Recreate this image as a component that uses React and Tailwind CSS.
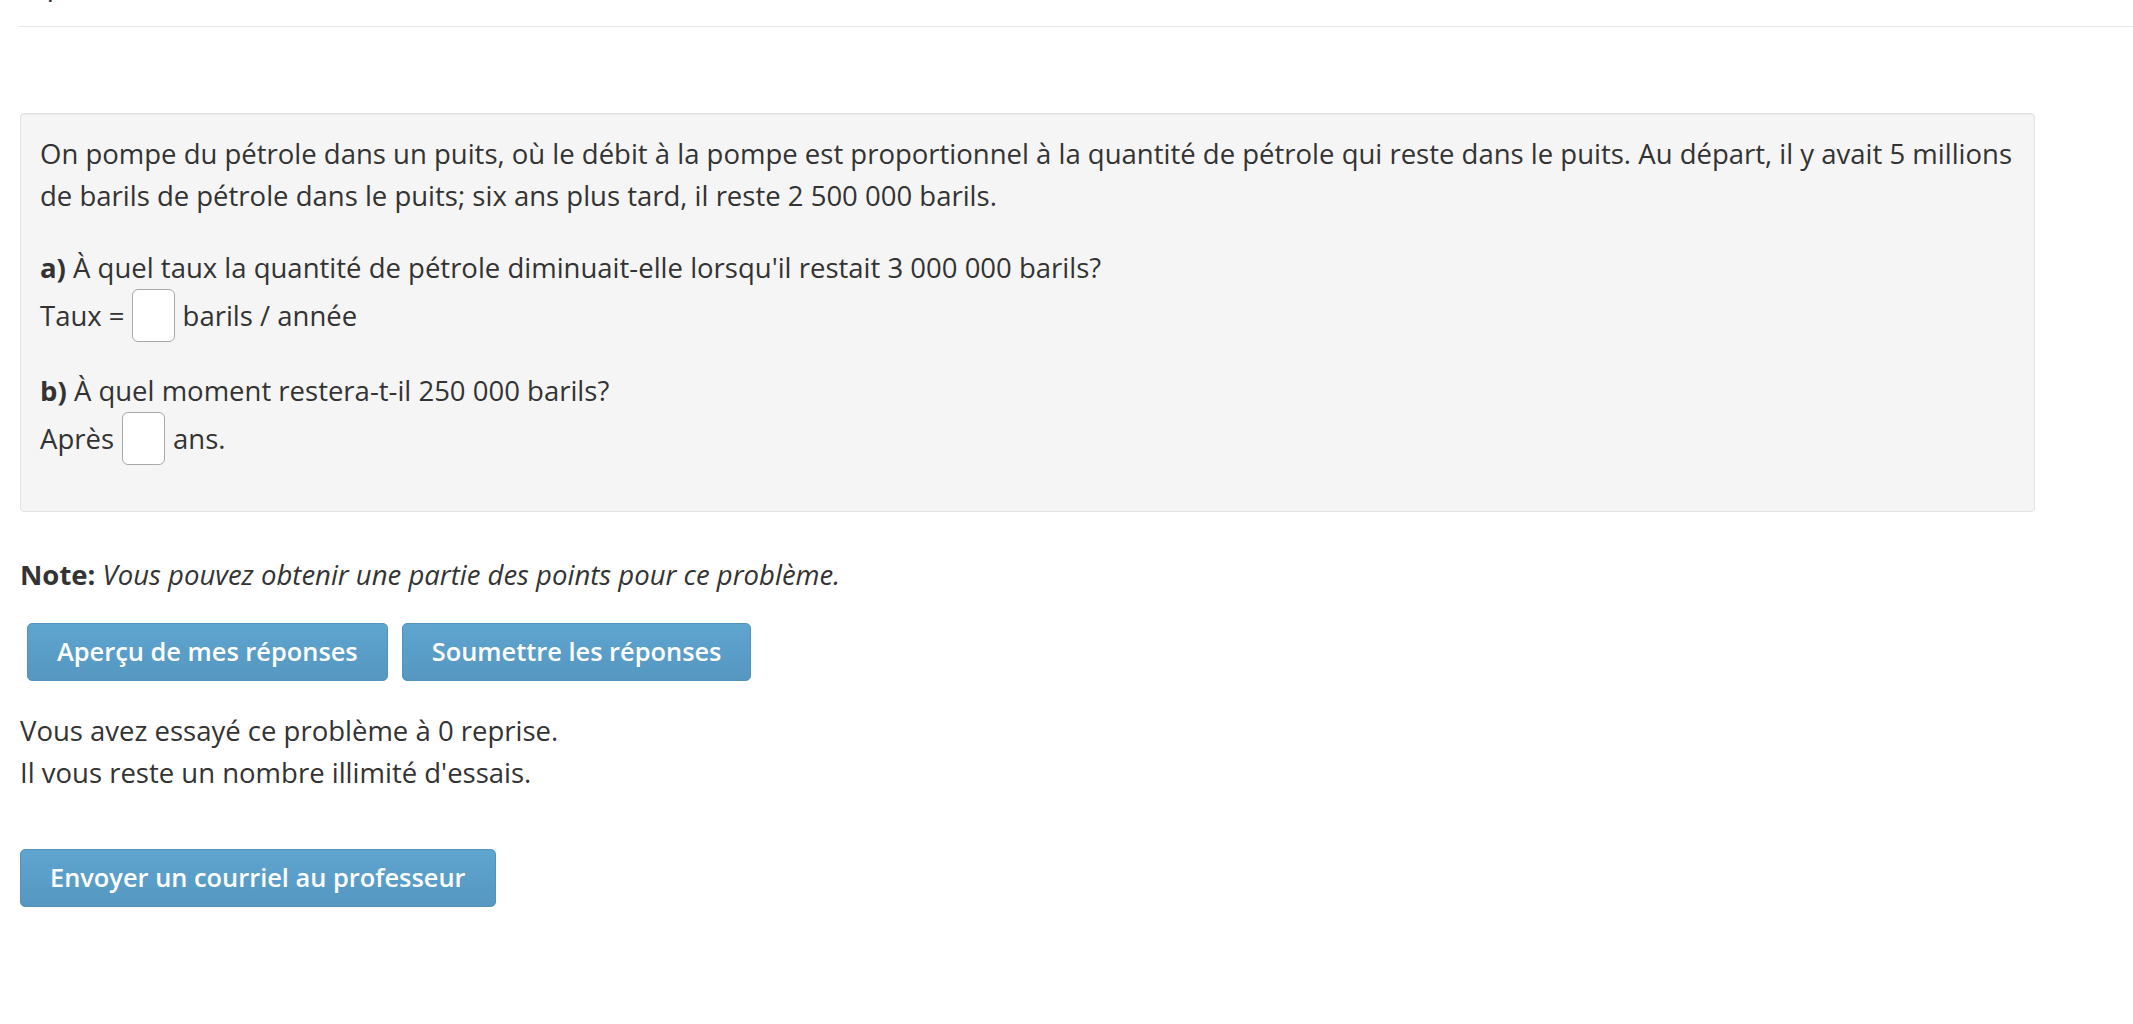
import React, { useState } from 'react';

const font = { fontFamily: '"Open Sans", "Noto Sans", sans-serif' };

function AnswerBox({ value, onChange, className = '' }) {
  return (
    <input
      type="text"
      value={value}
      onChange={(e) => onChange(e.target.value)}
      className={`w-[43px] h-[53px] rounded-[6px] border border-[#a9a9a9] bg-white px-1 text-[25px] outline-none ${className}`}
    />
  );
}

function BlueButton({ children, className = '' }) {
  return (
    <button
      type="button"
      className={`h-[58px] px-[29px] rounded-[5px] border border-[#5393bb] bg-gradient-to-b from-[#5ea5d0] to-[#5597c1] text-white text-[25.4px] font-semibold leading-none ${className}`}
    >
      {children}
    </button>
  );
}

export default function App() {
  const [taux, setTaux] = useState('');
  const [apres, setApres] = useState('');

  return (
    <div className="min-h-[1024px] bg-white text-[#333] text-[27.5px] leading-[42px]" style={font}>
      {/* heading scrolled out of view, only the rule below it shows */}
      <div className="ml-[19px] h-[27px] overflow-hidden border-b border-[#e5e5e5]">
        <h2 className="mt-[-36px] text-[30px] leading-[40px] font-normal">Équations</h2>
      </div>

      <div className="px-[20px] pt-[86px]">
        <div className="w-[2015px] rounded-[4px] border border-[#e3e3e3] bg-[#f5f5f5] pl-[19px] pr-[8px] py-[19px] shadow-[inset_0_1px_1px_rgba(0,0,0,0.05)]">
          <p>
            On pompe du pétrole dans un puits, où le débit à la pompe est proportionnel à la quantité de pétrole qui reste dans le puits. Au départ, il y avait 5 millions de barils de pétrole dans le puits; six ans plus tard, il reste 2 500 000 barils.
          </p>

          <p className="mt-[30px]">
            <b className="font-bold">a)</b> À quel taux la quantité de pétrole diminuait-elle lorsqu'il restait 3 000 000 barils?
          </p>
          <div className="flex items-center">
            <span>Taux =</span>
            <AnswerBox value={taux} onChange={setTaux} className="ml-[7px] mr-[8px]" />
            <span>barils / année</span>
          </div>

          <p className="mt-[28px]">
            <b className="font-bold">b)</b> À quel moment restera-t-il 250 000 barils?
          </p>
          <div className="flex items-center mb-[27px]">
            <span>Après</span>
            <AnswerBox value={apres} onChange={setApres} className="ml-[8px] mr-[8px]" />
            <span>ans.</span>
          </div>
        </div>

        <p className="mt-[42px]">
          <b className="font-bold">Note:</b> <i>Vous pouvez obtenir une partie des points pour ce problème.</i>
        </p>

        <div className="mt-[27px] ml-[7px] flex gap-[14px]">
          <BlueButton>Aperçu de mes réponses</BlueButton>
          <BlueButton>Soumettre les réponses</BlueButton>
        </div>

        <div className="mt-[29px]">
          <p>Vous avez essayé ce problème à 0 reprise.</p>
          <p>Il vous reste un nombre illimité d'essais.</p>
        </div>

        <BlueButton className="mt-[55px]">Envoyer un courriel au professeur</BlueButton>
      </div>
    </div>
  );
}
